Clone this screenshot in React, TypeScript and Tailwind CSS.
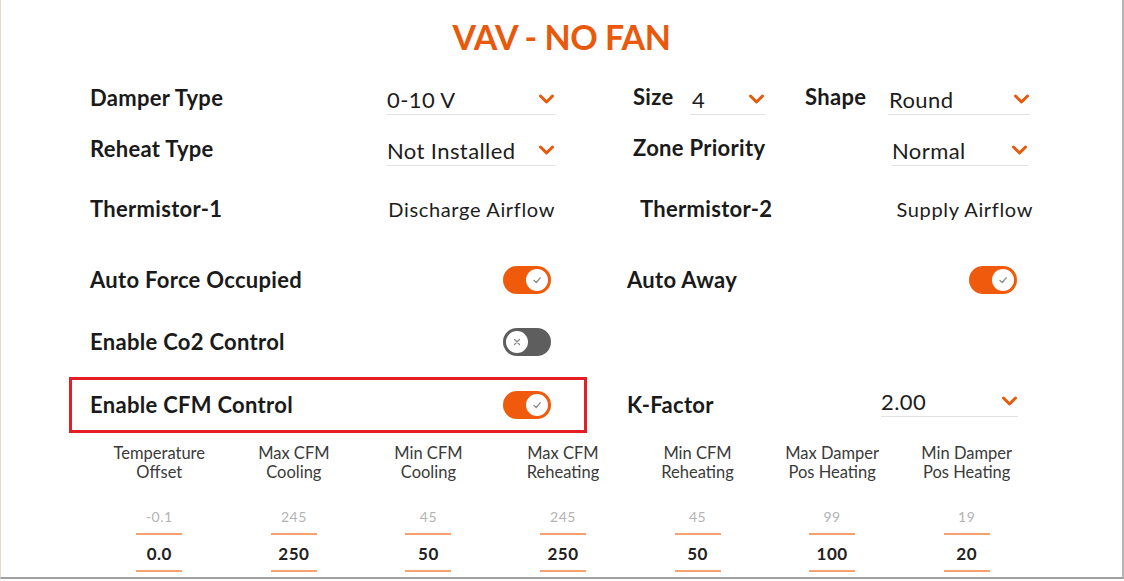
import React from 'react';

const font = { fontFamily: 'Lato, "Noto Sans", sans-serif' };

const Chevron: React.FC = () => (
  <svg width="17" height="10" viewBox="0 0 17 10" className="shrink-0">
    <polyline points="2.5,2 8.5,8 14.5,2" fill="none" stroke="#e8590c" strokeWidth="3" strokeLinecap="round" strokeLinejoin="round" />
  </svg>
);

interface DropdownProps {
  value: string;
  className: string;
}

const Dropdown: React.FC<DropdownProps> = ({ value, className }) => (
  <div className={`flex items-center justify-between border-b border-[#e2e2e2] h-[31px] ${className}`}>
    <span className="text-[22px] tracking-[0.4px] text-[#1c1c1c] leading-none pt-[3px]">{value}</span>
    <Chevron />
  </div>
);

const Toggle: React.FC<{ on: boolean }> = ({ on }) =>
  on ? (
    <div className="w-[48px] h-[28px] rounded-full bg-[#f05a0c] flex items-center justify-end pr-[3px] shrink-0">
      <div className="w-[22px] h-[22px] rounded-full bg-white flex items-center justify-center">
        <svg width="12" height="12" viewBox="0 0 12 12">
          <polyline points="3,6.5 5.2,8.5 9.2,3.8" fill="none" stroke="#8a8a8a" strokeWidth="1.3" strokeLinecap="round" strokeLinejoin="round" />
        </svg>
      </div>
    </div>
  ) : (
    <div className="w-[48px] h-[28px] rounded-full bg-[#5e5e5e] flex items-center justify-start pl-[3px] shrink-0">
      <div className="w-[22px] h-[22px] rounded-full bg-white flex items-center justify-center">
        <svg width="12" height="12" viewBox="0 0 12 12">
          <path d="M3.5 3.5 L8.5 8.5 M8.5 3.5 L3.5 8.5" fill="none" stroke="#8a8a8a" strokeWidth="1.3" strokeLinecap="round" />
        </svg>
      </div>
    </div>
  );

const Label: React.FC<{ children: React.ReactNode; className?: string }> = ({ children, className = '' }) => (
  <span className={`text-[22px] tracking-[0.3px] font-bold text-[#1a1a1a] leading-none whitespace-nowrap ${className}`}>{children}</span>
);

const params = [
  { label: ['Temperature', 'Offset'], min: '-0.1', value: '0.0' },
  { label: ['Max CFM', 'Cooling'], min: '245', value: '250' },
  { label: ['Min CFM', 'Cooling'], min: '45', value: '50' },
  { label: ['Max CFM', 'Reheating'], min: '245', value: '250' },
  { label: ['Min CFM', 'Reheating'], min: '45', value: '50' },
  { label: ['Max Damper', 'Pos Heating'], min: '99', value: '100' },
  { label: ['Min Damper', 'Pos Heating'], min: '19', value: '20' },
];

export default function App() {
  return (
    <div style={font} className="w-[1124px] h-[581px] bg-white overflow-hidden">
      <div className="h-[579px] border-l border-l-[#e3d9cf] border-r-2 border-r-[#b5b5b5] border-b-2 border-b-[#a0a0a0]">
        {/* Title */}
        <div className="h-[74px] flex items-center justify-center">
          <h1 className="text-[34px] font-bold text-[#e8590c] tracking-[-0.5px] leading-none">VAV - NO FAN</h1>
        </div>

        {/* Row 1 */}
        <div className="h-[50px] flex items-center pl-[89px]">
          <div className="w-[465px] flex items-center justify-between">
            <Label className="-mt-[3px]">Damper Type</Label>
            <Dropdown value="0-10 V" className="w-[168px]" />
          </div>
          <div className="w-[57px] ml-[78px] -mt-[1px]">
            <Label>Size</Label>
          </div>
          <Dropdown value="4" className="w-[75px] pl-[2px]" />
          <div className="w-[83px] ml-[40px] -mt-[1px]">
            <Label>Shape</Label>
          </div>
          <Dropdown value="Round" className="w-[142px] pl-[1px]" />
        </div>

        {/* Row 2 */}
        <div className="h-[52px] flex items-center pl-[89px]">
          <div className="w-[465px] flex items-center justify-between">
            <Label className="-mt-[3px]">Reheat Type</Label>
            <Dropdown value="Not Installed" className="w-[168px]" />
          </div>
          <div className="w-[259px] ml-[78px] -mt-[2px]">
            <Label>Zone Priority</Label>
          </div>
          <Dropdown value="Normal" className="w-[136px]" />
        </div>

        {/* Row 3 */}
        <div className="h-[66px] flex items-center pl-[89px]">
          <div className="w-[465px] flex items-center justify-between">
            <Label>Thermistor-1</Label>
            <span className="text-[20px] tracking-[0.65px] text-[#1c1c1c] leading-none">Discharge Airflow</span>
          </div>
          <div className="w-[393px] ml-[85px] flex items-center justify-between">
            <Label>Thermistor-2</Label>
            <span className="text-[20px] tracking-[0.65px] text-[#1c1c1c] leading-none">Supply Airflow</span>
          </div>
        </div>

        {/* Row 4 */}
        <div className="h-[76px] flex items-center pl-[89px]">
          <div className="w-[461px] flex items-center justify-between">
            <Label>Auto Force Occupied</Label>
            <Toggle on />
          </div>
          <div className="w-[390px] ml-[76px] flex items-center justify-between">
            <Label>Auto Away</Label>
            <Toggle on />
          </div>
        </div>

        {/* Row 5 */}
        <div className="h-[48px] flex items-center pl-[89px]">
          <div className="w-[461px] flex items-center justify-between">
            <Label>Enable Co2 Control</Label>
            <Toggle on={false} />
          </div>
        </div>

        {/* Row 6 */}
        <div className="flex items-center mt-[11px] pl-[68px]">
          <div className="w-[518px] h-[56px] border-[3px] border-[#e31e24] flex items-center justify-between pl-[18px] pr-[33px]">
            <Label>Enable CFM Control</Label>
            <Toggle on />
          </div>
          <div className="w-[254px] ml-[40px] pt-[2px]">
            <Label>K-Factor</Label>
          </div>
          <Dropdown value="2.00" className="w-[137px] -mt-[8px]" />
        </div>

        {/* Parameters */}
        <div className="grid grid-cols-7 w-[942px] ml-[91px] mt-[11px]">
          {params.map((p) => (
            <div key={p.label.join(' ')} className="flex flex-col items-center">
              <div className="text-[16.5px] leading-[19px] text-[#3a3a3a] text-center whitespace-nowrap">
                <div>{p.label[0]}</div>
                <div>{p.label[1]}</div>
              </div>
              <div className="mt-[28px] text-[14px] tracking-[0.5px] text-[#b3b3b3] leading-none">{p.min}</div>
              <div className="w-[46px] h-[2px] bg-[#f7a26e] mt-[9px]" />
              <div className="mt-[10px] text-[17px] tracking-[0.5px] font-bold text-[#222] leading-none">{p.value}</div>
              <div className="w-[46px] h-[2px] bg-[#f7a26e] mt-[8px]" />
            </div>
          ))}
        </div>
      </div>
    </div>
  );
}
